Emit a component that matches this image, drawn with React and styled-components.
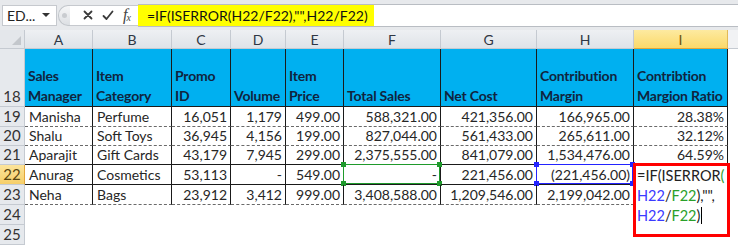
import React from 'react';
import styled, { createGlobalStyle, css } from 'styled-components';

const GlobalStyle = createGlobalStyle`
  html, body {
    margin: 0;
    padding: 0;
    background: #ffffff;
  }
  body {
    font-family: Lato, "Liberation Sans", Arial, sans-serif;
    font-size: 14px;
    color: #222;
  }
`;

const COLS = [68, 79, 59, 55, 58, 97, 96, 97, 94];
const LETTERS = ['A', 'B', 'C', 'D', 'E', 'F', 'G', 'H', 'I'];

const Window = styled.div`
  width: 738px;
  height: 245px;
  overflow: hidden;
  background: #ffffff;
`;

const FormulaBar = styled.div`
  height: 30px;
  background: #e7e9ec;
  display: flex;
  align-items: center;
  padding: 0 0 0 2px;
  box-sizing: border-box;
`;

const NameBox = styled.div`
  width: 55px;
  height: 21px;
  background: #fff;
  border: 1px solid #c6c9ce;
  box-sizing: border-box;
  display: flex;
  align-items: center;
  justify-content: space-between;
  padding: 0 6px 0 4px;
  font-size: 14px;
  color: #222;
`;

const DropArrow = styled.span`
  width: 0;
  height: 0;
  border-left: 4px solid transparent;
  border-right: 4px solid transparent;
  border-top: 4px solid #333;
`;

const Handle = styled.div`
  width: 12px;
  height: 21px;
  margin-left: 1px;
  border-radius: 10px 0 0 10px;
  background: linear-gradient(#f6f7f8, #dcdfe3);
  border: 1px solid #c2c6cb;
  border-right: none;
  box-sizing: border-box;
  display: flex;
  align-items: center;
  justify-content: center;
  &::after {
    content: '';
    width: 5px;
    height: 5px;
    border-radius: 50%;
    background: #c9ccd0;
  }
`;

const Tools = styled.div`
  flex: 0 0 68px;
  display: flex;
  align-items: center;
  gap: 9px;
  padding: 0 0 0 13px;
  height: 21px;
  background: #fff;
  border-top: 1px solid #c6c9ce;
  border-bottom: 1px solid #c6c9ce;
  box-sizing: border-box;
`;

const Fx = styled.span`
  font-family: "Liberation Serif", "DejaVu Serif", serif;
  font-style: italic;
  font-size: 16px;
  color: #444;
  letter-spacing: -1px;
  & sub {
    font-size: 10px;
    vertical-align: -1px;
  }
`;

const FormulaInput = styled.div`
  flex: 1;
  height: 23px;
  display: flex;
  align-items: center;
  background: #fff;
  border-top: 1px solid #b9bdc3;
  border-bottom: 1px solid #b9bdc3;
  box-sizing: border-box;
`;

const Highlight = styled.div`
  flex: 0 0 236px;
  background: #ffff00;
  height: 100%;
  box-sizing: border-box;
  display: flex;
  align-items: center;
  padding: 0 0 0 9px;
  font-size: 14px;
  white-space: nowrap;
  color: #111;
`;

const Sheet = styled.div`
  display: grid;
  grid-template-columns: 25px ${COLS.map((w) => `${w}px`).join(' ')} 1fr;
  grid-template-rows: 19px 58px 20px 19px 19px 20px 20px 20px 20px;
`;

const Corner = styled.div`
  background: #e4e7eb;
  border-right: 1px solid #c5cad1;
  border-bottom: 1px solid #c5cad1;
  display: flex;
  align-items: flex-end;
  justify-content: flex-end;
  padding: 0 3px 3px 0;
  &::after {
    content: '';
    width: 0;
    height: 0;
    border-left: 9px solid transparent;
    border-bottom: 9px solid #c3c7cc;
  }
`;

const ColHead = styled.div`
  background: ${(p) => (p.$active ? 'linear-gradient(#fdeaa0, #fbd96a)' : 'linear-gradient(#eef0f3, #dfe3e8)')};
  border-right: 1px solid ${(p) => (p.$active ? '#e2b957' : '#c5cad1')};
  border-bottom: 1px solid ${(p) => (p.$active ? '#e2a63a' : '#c5cad1')};
  display: flex;
  align-items: center;
  justify-content: center;
  font-size: 14px;
  color: ${(p) => (p.$active ? '#6b5310' : '#2f3744')};
  box-sizing: border-box;
`;

const ColFill = styled.div`
  background: #f1f2f4;
  border-bottom: 1px solid #c5cad1;
`;

const RowHead = styled.div`
  background: ${(p) => (p.$active ? 'linear-gradient(#fce49a, #f6cf6a)' : '#e6e9ed')};
  border-right: 1px solid ${(p) => (p.$active ? '#e2a63a' : '#c5cad1')};
  border-bottom: 1px solid #c5cad1;
  display: flex;
  align-items: flex-end;
  justify-content: center;
  padding-bottom: 1px;
  font-size: 15px;
  color: ${(p) => (p.$active ? '#5a4610' : '#333')};
  box-sizing: border-box;
`;

const Cell = styled.div`
  position: relative;
  display: flex;
  align-items: flex-end;
  justify-content: ${(p) => (p.$right ? 'flex-end' : 'flex-start')};
  padding: 0 3px 1px 4px;
  box-sizing: border-box;
  white-space: nowrap;
  color: #262626;
  ${(p) =>
    p.$grid &&
    css`
      border-right: 1px solid #1a1a1a;
      border-bottom: 1px ${p.$solid ? 'solid #1a1a1a' : 'dashed #6a6a6a'};
    `}
  ${(p) =>
    p.$head &&
    css`
      background: #00b0f0;
      font-weight: 700;
      color: #10243e;
      white-space: pre;
      line-height: 20px;
      padding: 0 0 0 3px;
      letter-spacing: -0.2px;
    `}
`;

const Marquee = styled.div`
  position: absolute;
  left: -1px;
  top: -1px;
  right: 0;
  bottom: 0;
  border: 1px solid ${(p) => p.$color};
  pointer-events: none;
  & i {
    position: absolute;
    width: 5px;
    height: 5px;
    background: ${(p) => p.$color};
  }
`;

const Editor = styled.div`
  position: absolute;
  left: -1px;
  top: -2px;
  width: 97px;
  height: 74px;
  border: 3px solid #ff0000;
  background: #fff;
  box-sizing: border-box;
  padding: 0 0 0 1px;
  font-size: 14.5px;
  line-height: 20px;
  color: #222;
  white-space: nowrap;
  z-index: 2;
`;

const Ref = styled.span`
  color: ${(p) => p.$color};
`;

const Caret = styled.span`
  display: inline-block;
  width: 1px;
  height: 17px;
  background: #000;
  vertical-align: -3px;
  margin-left: 1px;
`;

const header = [
  'Sales\nManager',
  'Item\nCategory',
  'Promo\nID',
  'Volume',
  'Item\nPrice',
  'Total Sales',
  'Net Cost',
  'Contribution\nMargin',
  'Contribtion\nMargion Ratio',
];

const rows = [
  { n: 19, cells: ['Manisha', 'Perfume', '16,051', '1,179', '499.00', '588,321.00', '421,356.00', '166,965.00', '28.38%'] },
  { n: 20, cells: ['Shalu', 'Soft Toys', '36,945', '4,156', '199.00', '827,044.00', '561,433.00', '265,611.00', '32.12%'] },
  { n: 21, cells: ['Aparajit', 'Gift Cards', '43,179', '7,945', '299.00', '2,375,555.00', '841,079.00', '1,534,476.00', '64.59%'], solid: true },
  { n: 22, cells: ['Anurag', 'Cosmetics', '53,113', '-', '549.00', '-', '221,456.00', '(221,456.00)', ''], solid: true, active: true },
  { n: 23, cells: ['Neha', 'Bags', '23,912', '3,412', '999.00', '3,408,588.00', '1,209,546.00', '2,199,042.00', ''] },
];

const Corners = () => (
  <>
    <i style={{ left: -3, top: -3 }} />
    <i style={{ right: -3, top: -3 }} />
    <i style={{ left: -3, bottom: -3 }} />
    <i style={{ right: -3, bottom: -3 }} />
  </>
);

const CloseIcon = () => (
  <svg width="10" height="10" viewBox="0 0 10 10">
    <path d="M1.5 1.5 L8.5 8.5 M8.5 1.5 L1.5 8.5" stroke="#3a3a3a" strokeWidth="1.8" strokeLinecap="round" />
  </svg>
);

const CheckIcon = () => (
  <svg width="12" height="11" viewBox="0 0 12 11">
    <path d="M1.5 6 L4.5 9 L10.5 1.5" stroke="#3a3a3a" strokeWidth="1.8" fill="none" strokeLinecap="round" strokeLinejoin="round" />
  </svg>
);

export default function App() {
  return (
    <Window>
      <GlobalStyle />
      <FormulaBar>
        <NameBox>
          ED...
          <DropArrow />
        </NameBox>
        <Handle />
        <Tools>
          <CloseIcon />
          <CheckIcon />
          <Fx>
            f<sub>x</sub>
          </Fx>
        </Tools>
        <FormulaInput>
          <Highlight>=IF(ISERROR(H22/F22),"",H22/F22)</Highlight>
        </FormulaInput>
      </FormulaBar>

      <Sheet>
        <Corner />
        {LETTERS.map((l) => (
          <ColHead key={l} $active={l === 'I'}>
            {l}
          </ColHead>
        ))}
        <ColFill />

        <RowHead>18</RowHead>
        {header.map((h, i) => (
          <Cell key={i} $head $grid $solid>
            {h}
          </Cell>
        ))}
        <div />

        {rows.map((r) => (
          <React.Fragment key={r.n}>
            <RowHead $active={r.active}>{r.n}</RowHead>
            {r.cells.map((c, i) => (
              <Cell key={i} $grid $solid={r.solid} $right={i > 1}>
                {c}
                {r.active && i === 5 && (
                  <Marquee $color="#1f9a2c">
                    <Corners />
                  </Marquee>
                )}
                {r.active && i === 7 && (
                  <Marquee $color="#2323ff">
                    <Corners />
                  </Marquee>
                )}
                {r.active && i === 8 && (
                  <Editor>
                    =IF(ISERROR<Ref $color="#2aa02a">(</Ref>
                    <br />
                    <Ref $color="#3a3aff">H22</Ref>/<Ref $color="#2aa02a">F22</Ref>),"",
                    <br />
                    <Ref $color="#3a3aff">H22</Ref>/<Ref $color="#2aa02a">F22</Ref>)
                    <Caret />
                  </Editor>
                )}
              </Cell>
            ))}
            <div />
          </React.Fragment>
        ))}

        <RowHead>24</RowHead>
        {LETTERS.map((l) => (
          <div key={l} />
        ))}
        <div />
        <RowHead>25</RowHead>
      </Sheet>
    </Window>
  );
}
